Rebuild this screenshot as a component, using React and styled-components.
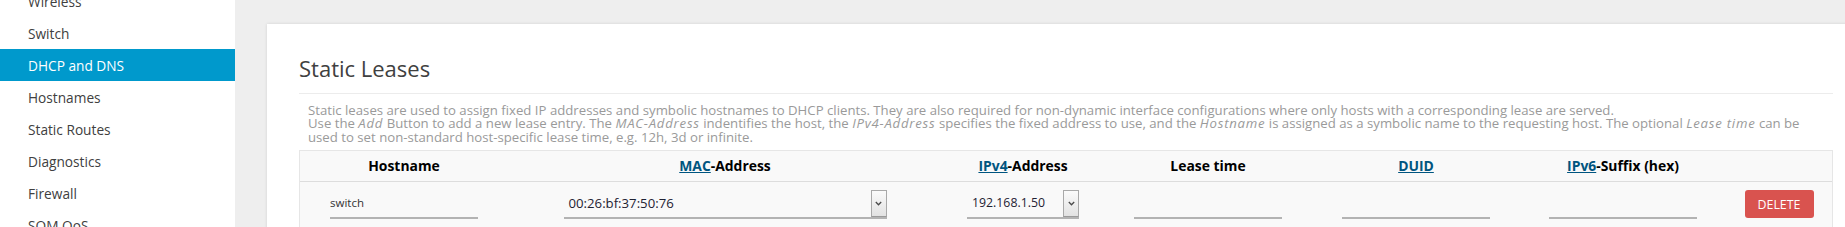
import React from "react";
import styled, { createGlobalStyle } from "styled-components";

const Global = createGlobalStyle`
  html, body { margin: 0; padding: 0; overflow: hidden; }
  body { font-family: "Open Sans", "Noto Sans", sans-serif; background: #eeeeee; }
  #root { width: 1845px; height: 227px; }
`;

const Page = styled.div`
  display: flex;
  width: 1845px;
  height: 227px;
  overflow: hidden;
  background: #eeeeee;
`;

const Sidebar = styled.nav`
  width: 235px;
  flex: none;
  height: 100%;
  background: #ffffff;
  overflow: hidden;
`;

const MenuList = styled.ul`
  list-style: none;
  margin: -15px 0 0;
  padding: 0;
`;

const MenuItem = styled.li`
  height: 32px;
  display: flex;
  align-items: center;
  padding-left: 28px;
  font-size: 13.7px;
  color: ${(p) => (p.$active ? "#ffffff" : "#404040")};
  background: ${(p) => (p.$active ? "#0099cc" : "transparent")};
  cursor: pointer;
`;

const Main = styled.main`
  flex: 1;
  min-width: 0;
  padding: 24px 0 0 32px;
`;

const Card = styled.section`
  width: 1598px;
  box-sizing: border-box;
  padding: 0 32px 20px;
  background: #ffffff;
  box-shadow: 0 0 3px rgba(0, 0, 0, 0.12);
`;

const Title = styled.h2`
  margin: 0;
  padding: 29px 0 10px;
  font-size: 22px;
  font-weight: 400;
  line-height: 30px;
  color: #404040;
  border-bottom: 1px solid #ececec;
`;

const Description = styled.p`
  margin: 10px 0 0 9px;
  font-size: 13.2px;
  line-height: 13.4px;
  color: #9a9a9a;
  white-space: nowrap;

  em {
    font-style: italic;
    letter-spacing: 0.75px;
  }
`;

const columns = "208px 434px 162px 208px 208px 206px 106px";

const Table = styled.div`
  margin-top: 5.5px;
  border: 1px solid #e6e6e6;
  border-bottom: none;
  background: #f9f9f9;
`;

const Row = styled.div`
  display: grid;
  grid-template-columns: ${columns};
  height: ${(p) => (p.$header ? "30px" : "45px")};
  border-bottom: 1px solid #dddddd;
`;

const HeadCell = styled.div`
  display: flex;
  align-items: center;
  justify-content: center;
  font-size: 13.9px;
  font-weight: 700;
  color: #000000;
`;

const Abbr = styled.span`
  color: #005580;
  text-decoration: underline;
  cursor: help;
`;

const Cell = styled.div`
  display: flex;
  align-items: center;
  justify-content: center;
`;

const TextInput = styled.input`
  width: 148px;
  height: 29px;
  box-sizing: border-box;
  padding: 0 0 1px;
  border: none;
  border-bottom: 2px solid #b3b3b3;
  background: transparent;
  font-family: "Open Sans", sans-serif;
  font-size: 11.5px;
  color: #333333;
  outline: none;
`;

const SelectBox = styled.div`
  display: flex;
  align-items: flex-start;
  width: ${(p) => p.$width}px;
  height: 29px;
  box-sizing: border-box;
  border-bottom: 2px solid #b3b3b3;
  cursor: pointer;
`;

const SelectValue = styled.span`
  flex: 1;
  height: 27px;
  display: flex;
  align-items: center;
  padding-left: 5px;
  padding-bottom: 1px;
  box-sizing: border-box;
  font-size: ${(p) => p.$size}px;
  color: #1f2233;
  white-space: nowrap;
`;

const ArrowButton = styled.span`
  flex: none;
  width: 16px;
  height: 27px;
  box-sizing: border-box;
  border: 1px solid #a9a9a9;
  border-bottom-color: #9a9a9a;
  background: linear-gradient(#fbfbfb, #e2e2e2);
  display: flex;
  align-items: center;
  justify-content: center;
`;

const DeleteButton = styled.button`
  width: 69px;
  height: 28px;
  padding: 0;
  border: none;
  border-radius: 3px;
  background: #d9534f;
  color: #ffffff;
  font-family: "Open Sans", sans-serif;
  font-size: 12.4px;
  cursor: pointer;
`;

const Chevron = () => (
  <svg width="7" height="5" viewBox="0 0 7 5">
    <polyline points="0.8,1 3.5,3.8 6.2,1" fill="none" stroke="#4a4a4a" strokeWidth="1.3" />
  </svg>
);

const Select = ({ width, size, value }) => (
  <SelectBox $width={width}>
    <SelectValue $size={size}>{value}</SelectValue>
    <ArrowButton>
      <Chevron />
    </ArrowButton>
  </SelectBox>
);

const menu = ["Wireless", "Switch", "DHCP and DNS", "Hostnames", "Static Routes", "Diagnostics", "Firewall", "SQM QoS"];

export default function App() {
  return (
    <>
      <Global />
      <Page>
        <Sidebar>
          <MenuList>
            {menu.map((m) => (
              <MenuItem key={m} $active={m === "DHCP and DNS"}>
                {m}
              </MenuItem>
            ))}
          </MenuList>
        </Sidebar>
        <Main>
          <Card>
            <Title>Static Leases</Title>
            <Description>
              Static leases are used to assign fixed IP addresses and symbolic hostnames to DHCP clients. They are also
              required for non-dynamic interface configurations where only hosts with a corresponding lease are served.
              <br />
              Use the <em>Add</em> Button to add a new lease entry. The <em>MAC-Address</em> indentifies the host, the{" "}
              <em>IPv4-Address</em> specifies the fixed address to use, and the <em>Hostname</em> is assigned as a
              symbolic name to the requesting host. The optional <em>Lease time</em> can be
              <br />
              used to set non-standard host-specific lease time, e.g. 12h, 3d or infinite.
            </Description>
            <Table>
              <Row $header>
                <HeadCell>Hostname</HeadCell>
                <HeadCell>
                  <Abbr>MAC</Abbr>-Address
                </HeadCell>
                <HeadCell>
                  <Abbr>IPv4</Abbr>-Address
                </HeadCell>
                <HeadCell>Lease time</HeadCell>
                <HeadCell>
                  <Abbr>DUID</Abbr>
                </HeadCell>
                <HeadCell>
                  <Abbr>IPv6</Abbr>-Suffix (hex)
                </HeadCell>
                <HeadCell />
              </Row>
              <Row>
                <Cell>
                  <TextInput defaultValue="switch" />
                </Cell>
                <Cell>
                  <Select width={323} size={13.2} value="00:26:bf:37:50:76" />
                </Cell>
                <Cell>
                  <Select width={112} size={12.3} value="192.168.1.50" />
                </Cell>
                <Cell>
                  <TextInput />
                </Cell>
                <Cell>
                  <TextInput />
                </Cell>
                <Cell>
                  <TextInput />
                </Cell>
                <Cell>
                  <DeleteButton>DELETE</DeleteButton>
                </Cell>
              </Row>
            </Table>
          </Card>
        </Main>
      </Page>
    </>
  );
}
